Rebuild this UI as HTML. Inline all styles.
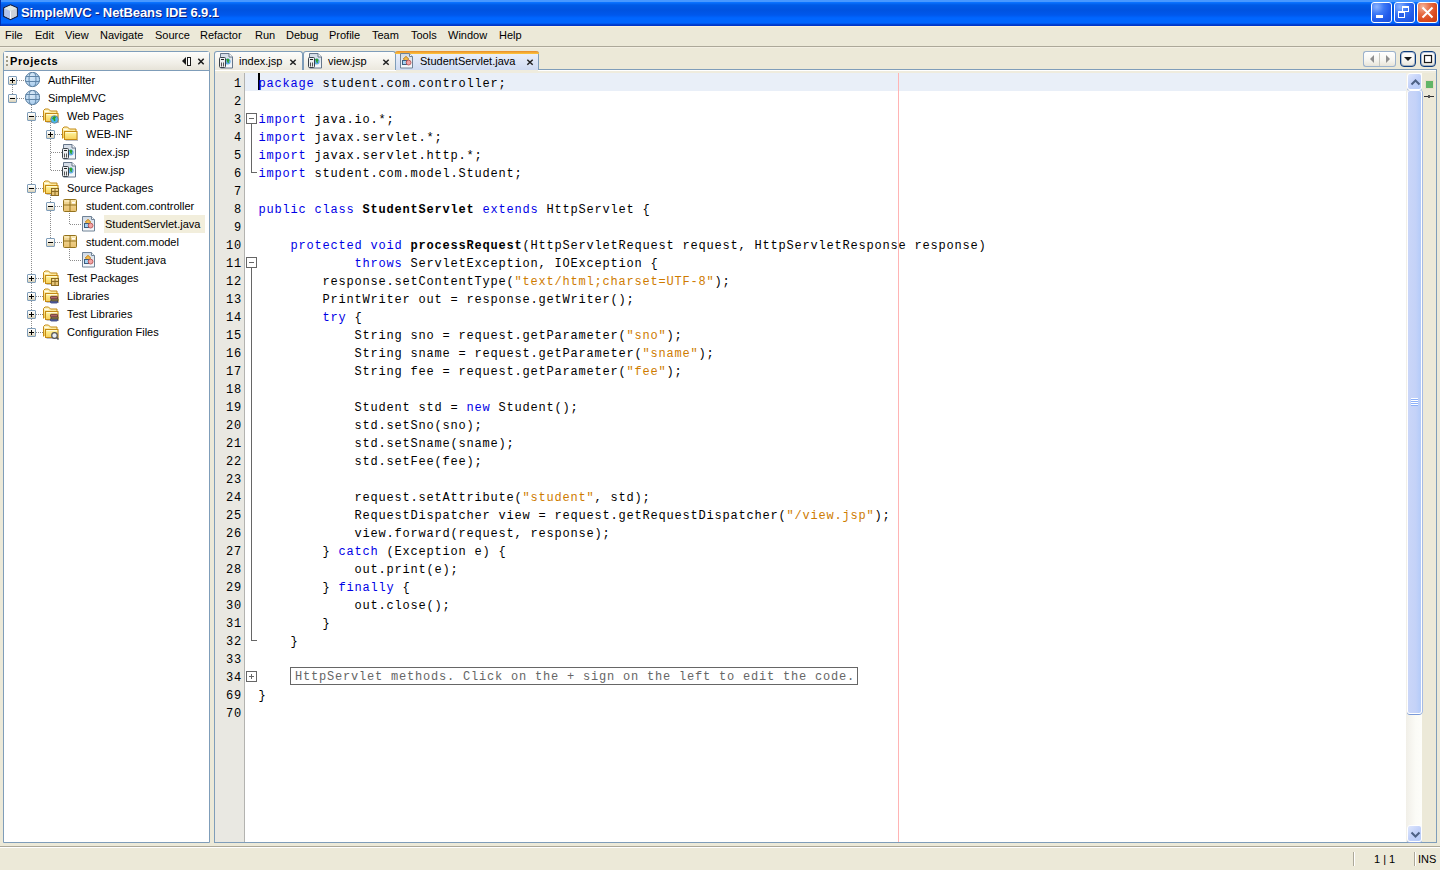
<!DOCTYPE html>
<html><head><meta charset="utf-8">
<style>
*{box-sizing:border-box}
html,body{margin:0;padding:0}
body{width:1440px;height:870px;overflow:hidden;position:relative;background:#ece9d8;font-family:"Liberation Sans",sans-serif;font-size:11px;color:#000}
.a{position:absolute}
#title{left:0;top:0;width:1440px;height:26px;background:linear-gradient(#4898ff 0px,#4898ff 1.5px,#0a72ff 2.5px,#005be6 5px,#0053e0 10px,#0058ec 15px,#0066ff 18px,#0066ff 23px,#0042d2 24.5px,#0030c4 26px);box-shadow:inset 1px 0 #0030b0,inset -1px 0 #0030b0}
.tt2{left:21px;top:5px;color:#fff;font-weight:bold;font-size:13px;line-height:16px;text-shadow:1px 1px #0a1e80;white-space:nowrap;letter-spacing:-0.1px}
.wb{top:2px;width:21px;height:21px;border:1px solid #fff;border-radius:3px;background:radial-gradient(circle at 25% 20%,#8cb4ff 0,#3c78f6 35%,#225ceb 65%,#1a4fd8 100%)}
.wb.x{background:radial-gradient(circle at 25% 20%,#f5b49a 0,#e66c44 35%,#dc4c20 65%,#c43b12 100%)}
#menu{left:0;top:26px;width:1440px;height:20px}
#menu span{position:absolute;top:3px;white-space:nowrap}
.sep1{left:0;width:1440px;height:1px;background:#aca899}
.sep2{left:0;width:1440px;height:1px;background:#fff}
#proj{left:3px;top:51px;width:207px;height:792px;border:1px solid #7f9db9;border-radius:3px 3px 0 0;background:#fff}
#proj .hd{left:0;top:0;width:205px;height:19px;border-bottom:1px solid #7f9db9;background:linear-gradient(#fdfdfb,#f1efe8 60%,#e6e3d8)}
.tr{position:absolute;white-space:nowrap}
.exp{position:absolute;width:9px;height:9px;border:1px solid #7f9db9;border-radius:1px;background:linear-gradient(#fff,#efeadb 60%,#d6cfb8)}
#ed{left:214px;top:69px;width:1223px;height:774px;border:1px solid #7f9db9;background:#fff}
.tab{position:absolute;top:51px;height:19px;border:1px solid #7f9db9;border-bottom:none;border-radius:3px 3px 0 0;background:linear-gradient(#fcfcfa,#f2f0e8 60%,#e9e6dc)}
.tab span{position:absolute;top:3px;white-space:nowrap}
.gut{left:0;top:3px;width:30px;height:770px;background:#e9e8e2;border-right:1px solid #b4b4b4}
.code{font-family:"Liberation Mono",monospace;font-size:12px;letter-spacing:0.8px;white-space:pre;line-height:18px;height:18px;padding-top:2px}
.ln{position:absolute;width:28px;text-align:right;left:214px}
.cl{position:absolute;left:258.4px}
.k{color:#0000e6}
.s{color:#ce7b00}
.b{font-weight:bold}
#ed{left:214px;top:69px;width:1223px;height:774px;border:1px solid #7f9db9;background:#fff}
.tab{position:absolute;top:51px;height:19px;border:1px solid #7f9db9;border-bottom:none;border-radius:3px 3px 0 0;background:linear-gradient(#fdfdfb,#f3f1ea 60%,#ebe8de)}
.tab.act{border:1px solid #7f9db9;border-top:none;border-bottom:none;height:19px;background:linear-gradient(#eef2fb,#dce5f6 60%,#cfdbf2)}
.tab.act:before{content:"";position:absolute;left:-1px;right:-1px;top:0;height:3px;border-radius:3px 3px 0 0;background:linear-gradient(#e68b2c,#ffc73c)}
.tt{top:52px;line-height:19px;white-space:nowrap}
.fb{width:11px;height:11px;border:1px solid #666;background:#fff}
.fb .h{position:absolute;left:2px;top:4px;width:5px;height:1px;background:#666}
.fb .v{position:absolute;left:4px;top:2px;width:1px;height:5px;background:#666}
.sbb{width:15px;height:17px;border:1px solid #fff;border-radius:3px;background:linear-gradient(135deg,#dfe7fd,#c2d1f9 50%,#b6cbf9);box-shadow:0 1px 0 #8fa8dc}
.sbt{width:15px;border:1px solid #fff;border-radius:3px;background:linear-gradient(90deg,#cad6f8,#c4d2f8 60%,#b3cbf9);box-shadow:1px 0 0 #a6bbe4,0 1px 0 #7a9ad8}
.nb{top:51px;width:16px;height:16px;border:1px solid #9cb2cc;border-radius:3px;background:linear-gradient(#fff,#f6f5f0 60%,#e8e4d8)}
.nb.dk{border:1px solid #0c3b7c;border-radius:4px;box-shadow:inset 0 0 0 1px rgba(12,59,124,.3)}
.nb svg{position:absolute;left:0;top:0}

</style></head><body>
<svg width="0" height="0" style="position:absolute">
<defs>
<linearGradient id="gf" x1="0" y1="0" x2="0" y2="1"><stop offset="0" stop-color="#fff8c8"/><stop offset="1" stop-color="#f2c94a"/></linearGradient>
<linearGradient id="gff" x1="0" y1="0" x2="0" y2="1"><stop offset="0" stop-color="#fff7a0"/><stop offset="1" stop-color="#f6cf5a"/></linearGradient>
<linearGradient id="gp" x1="0" y1="0" x2="0" y2="1"><stop offset="0" stop-color="#f3dca0"/><stop offset="1" stop-color="#e8c170"/></linearGradient>
<radialGradient id="gg" cx=".4" cy=".3" r=".75"><stop offset="0" stop-color="#dcebf8"/><stop offset="1" stop-color="#a6cbec"/></radialGradient>
<linearGradient id="gj" x1="0" y1="0" x2="0" y2="1"><stop offset="0" stop-color="#d0d9e4"/><stop offset="1" stop-color="#fafcfe"/></linearGradient>
</defs></svg>

<div id="title" class="a"></div>
<svg class="a" style="left:3px;top:4px" width="16" height="17" viewBox="0 0 16 17">
<path d="M7.5 .8L14.3 3.8V12.3L7.5 15.6L.7 12.3V3.8Z" fill="#c8d4e8" stroke="#141e3c" stroke-width="1.2"/>
<path d="M1.3 4.2L7.5 7L13.7 4.2L7.5 1.5Z" fill="#dfeae4"/>
<path d="M1.3 4.5L7.5 7.2V15L1.3 12Z" fill="#b4c4ea"/>
<path d="M7.5 7.2L13.7 4.5V12L7.5 15Z" fill="#ccd2d8"/>
<path d="M7.5 7.2V15" stroke="#f4f8ff" stroke-width="1"/>
</svg>
<div class="a tt2">SimpleMVC - NetBeans IDE 6.9.1</div>
<div class="a wb" style="left:1371px"><i style="position:absolute;left:4px;top:12px;width:7px;height:3px;background:#fff"></i></div>
<div class="a wb" style="left:1394px"><svg width="19" height="19" style="position:absolute;left:0;top:0"><path d="M7.5 7.5h4v-3M7.5 4.5v3" fill="none"/><rect x="7.5" y="3.5" width="6" height="5" fill="none" stroke="#fff" stroke-width="1"/><path d="M7 4h7" stroke="#fff" stroke-width="2"/><rect x="3.5" y="8.5" width="6" height="6" fill="#2a5fe8" stroke="#fff" stroke-width="1"/><path d="M3 9h7" stroke="#fff" stroke-width="2"/></svg></div>
<div class="a wb x" style="left:1417px"><svg width="19" height="19" style="position:absolute;left:0;top:0"><path d="M4.5 4.5l10 10M14.5 4.5l-10 10" stroke="#fff" stroke-width="2"/></svg></div>

<div class="a" style="left:0;top:26px;width:1440px;height:1px;background:#f9f3dd"></div>
<div id="menu" class="a">
<span style="left:5px">File</span><span style="left:35px">Edit</span><span style="left:65px">View</span><span style="left:100px">Navigate</span><span style="left:155px">Source</span><span style="left:200px">Refactor</span><span style="left:255px">Run</span><span style="left:286px">Debug</span><span style="left:329px">Profile</span><span style="left:372px">Team</span><span style="left:411px">Tools</span><span style="left:448px">Window</span><span style="left:499px">Help</span>
</div>
<div class="a sep1" style="top:46px"></div>
<div class="a" style="left:0;top:47px;width:1440px;height:1px;background:#f3efe2"></div>

<div id="proj" class="a">
  <div class="a hd"></div>
</div>
<div class="a" style="left:6px;top:56px;width:2px;height:10px;background:repeating-linear-gradient(#a09c88 0 2px,transparent 2px 4px)"></div>
<div class="a b" style="left:10px;top:54px;font-size:11px;line-height:15px;letter-spacing:0.6px">Projects</div>
<svg class="a" style="left:180px;top:55px" width="28" height="12" viewBox="0 0 28 12"><path d="M2 6L6 2V10Z" fill="#1a1a1a"/><rect x="7.5" y="2.5" width="3" height="8" fill="#fff" stroke="#1a1a1a"/><path d="M18.3 3.8l5.4 5.4M23.7 3.8l-5.4 5.4" stroke="#1a1a1a" stroke-width="1.5"/></svg>
<div class="a" style="left:12px;top:85px;width:1px;height:10px;background:repeating-linear-gradient(#8c8c8c 0 1px,transparent 1px 2px)"></div><div class="a" style="left:31px;top:105px;width:1px;height:228px;background:repeating-linear-gradient(#8c8c8c 0 1px,transparent 1px 2px)"></div><div class="a" style="left:50px;top:123px;width:1px;height:48px;background:repeating-linear-gradient(#8c8c8c 0 1px,transparent 1px 2px)"></div><div class="a" style="left:50px;top:195px;width:1px;height:44px;background:repeating-linear-gradient(#8c8c8c 0 1px,transparent 1px 2px)"></div><div class="a" style="left:69px;top:213px;width:1px;height:12px;background:repeating-linear-gradient(#8c8c8c 0 1px,transparent 1px 2px)"></div><div class="a" style="left:69px;top:249px;width:1px;height:12px;background:repeating-linear-gradient(#8c8c8c 0 1px,transparent 1px 2px)"></div><div class="a" style="left:17px;top:80px;width:7px;height:1px;background:repeating-linear-gradient(90deg,#8c8c8c 0 1px,transparent 1px 2px)"></div><div class="a" style="left:17px;top:98px;width:7px;height:1px;background:repeating-linear-gradient(90deg,#8c8c8c 0 1px,transparent 1px 2px)"></div><div class="a" style="left:36px;top:116px;width:7px;height:1px;background:repeating-linear-gradient(90deg,#8c8c8c 0 1px,transparent 1px 2px)"></div><div class="a" style="left:55px;top:134px;width:7px;height:1px;background:repeating-linear-gradient(90deg,#8c8c8c 0 1px,transparent 1px 2px)"></div><div class="a" style="left:51px;top:152px;width:11px;height:1px;background:repeating-linear-gradient(90deg,#8c8c8c 0 1px,transparent 1px 2px)"></div><div class="a" style="left:51px;top:170px;width:11px;height:1px;background:repeating-linear-gradient(90deg,#8c8c8c 0 1px,transparent 1px 2px)"></div><div class="a" style="left:36px;top:188px;width:7px;height:1px;background:repeating-linear-gradient(90deg,#8c8c8c 0 1px,transparent 1px 2px)"></div><div class="a" style="left:55px;top:206px;width:7px;height:1px;background:repeating-linear-gradient(90deg,#8c8c8c 0 1px,transparent 1px 2px)"></div><div class="a" style="left:70px;top:224px;width:11px;height:1px;background:repeating-linear-gradient(90deg,#8c8c8c 0 1px,transparent 1px 2px)"></div><div class="a" style="left:55px;top:242px;width:7px;height:1px;background:repeating-linear-gradient(90deg,#8c8c8c 0 1px,transparent 1px 2px)"></div><div class="a" style="left:70px;top:260px;width:11px;height:1px;background:repeating-linear-gradient(90deg,#8c8c8c 0 1px,transparent 1px 2px)"></div><div class="a" style="left:36px;top:278px;width:7px;height:1px;background:repeating-linear-gradient(90deg,#8c8c8c 0 1px,transparent 1px 2px)"></div><div class="a" style="left:36px;top:296px;width:7px;height:1px;background:repeating-linear-gradient(90deg,#8c8c8c 0 1px,transparent 1px 2px)"></div><div class="a" style="left:36px;top:314px;width:7px;height:1px;background:repeating-linear-gradient(90deg,#8c8c8c 0 1px,transparent 1px 2px)"></div><div class="a" style="left:36px;top:332px;width:7px;height:1px;background:repeating-linear-gradient(90deg,#8c8c8c 0 1px,transparent 1px 2px)"></div>
<div class="exp" style="left:8px;top:76px"><svg width="7" height="7" viewBox="0 0 9 9" style="position:absolute;left:0;top:0;width:9px;height:9px;margin:-1px"><path d="M2 4.5h5" stroke="#000"/><path d="M4.5 2v5" stroke="#000"/></svg></div>
<svg class="a" style="left:24px;top:72px" width="16" height="16" viewBox="0 0 16 16"><circle cx="8.5" cy="7.5" r="7.1" fill="url(#gg)" stroke="#52789b"/><path d="M1.6 4.5h13.8M1.6 9.5h13.8M6.4 .7c-1.8 2.5-1.8 11.1 0 13.6M10.6 .7c1.8 2.5 1.8 11.1 0 13.6" fill="none" stroke="#5f85a8" stroke-width="1"/></svg>
<div class="tr" style="left:48px;top:71px;line-height:18px">AuthFilter</div>
<div class="exp" style="left:8px;top:94px"><svg width="7" height="7" viewBox="0 0 9 9" style="position:absolute;left:0;top:0;width:9px;height:9px;margin:-1px"><path d="M2 4.5h5" stroke="#000"/></svg></div>
<svg class="a" style="left:24px;top:90px" width="16" height="16" viewBox="0 0 16 16"><circle cx="8.5" cy="7.5" r="7.1" fill="url(#gg)" stroke="#52789b"/><path d="M1.6 4.5h13.8M1.6 9.5h13.8M6.4 .7c-1.8 2.5-1.8 11.1 0 13.6M10.6 .7c1.8 2.5 1.8 11.1 0 13.6" fill="none" stroke="#5f85a8" stroke-width="1"/></svg>
<div class="tr" style="left:48px;top:89px;line-height:18px">SimpleMVC</div>
<div class="exp" style="left:27px;top:112px"><svg width="7" height="7" viewBox="0 0 9 9" style="position:absolute;left:0;top:0;width:9px;height:9px;margin:-1px"><path d="M2 4.5h5" stroke="#000"/></svg></div>
<svg class="a" style="left:43px;top:108px" width="16" height="16" viewBox="0 0 16 16"><path d="M3.5 14.5h12.5v-8" fill="none" stroke="rgba(40,50,80,.3)"/><path d="M.5 12.5v-10l1.5-1.5h3.5l2 2h6.5v3.5" fill="url(#gf)" stroke="#c48a14"/><path d="M1.5 3.5h4" stroke="#fff" stroke-width=".8"/><rect x="2.5" y="5.5" width="12.5" height="8" fill="url(#gff)" stroke="#c48a14"/><path d="M3.5 6.6h10.5" stroke="#fffbe0"/><circle cx="11.5" cy="11.5" r="3.8" fill="#4ab8f0" stroke="#6a7a8a" stroke-width=".8"/><path d="M10 9l2-1 1 1.5-1 1 .5 2-1.5 1-.5-2-1.5-.5z" fill="#2fa020"/></svg>
<div class="tr" style="left:67px;top:107px;line-height:18px">Web Pages</div>
<div class="exp" style="left:46px;top:130px"><svg width="7" height="7" viewBox="0 0 9 9" style="position:absolute;left:0;top:0;width:9px;height:9px;margin:-1px"><path d="M2 4.5h5" stroke="#000"/><path d="M4.5 2v5" stroke="#000"/></svg></div>
<svg class="a" style="left:62px;top:126px" width="16" height="16" viewBox="0 0 16 16"><path d="M3.5 14.5h12.5v-8" fill="none" stroke="rgba(40,50,80,.3)"/><path d="M.5 12.5v-10l1.5-1.5h3.5l2 2h6.5v3.5" fill="url(#gf)" stroke="#c48a14"/><path d="M1.5 3.5h4" stroke="#fff" stroke-width=".8"/><rect x="2.5" y="5.5" width="12.5" height="8" fill="url(#gff)" stroke="#c48a14"/><path d="M3.5 6.6h10.5" stroke="#fffbe0"/></svg>
<div class="tr" style="left:86px;top:125px;line-height:18px">WEB-INF</div>
<svg class="a" style="left:62px;top:144px" width="16" height="16" viewBox="0 0 16 16"><path d="M1.5 .5h8.5l3.5 3.5v11h-12z" fill="url(#gj)" stroke="#66768a"/><path d="M10 .5v3.5h3.5" fill="#fafcfe" stroke="#66768a"/><circle cx="8.6" cy="8.6" r="3" fill="#62aee8"/><path d="M7.2 6.2l2-.6 1.4 1.6-1 1.2.5 1.8-1.6-.8-.6-1.6z" fill="#2ea426"/><rect x=".5" y="4.5" width="6" height="10" rx="1" fill="#eceef0" stroke="#3a424a"/><path d="M2 6.5h3" stroke="#222"/><path d="M2.5 9.5v4M4.5 9.5v4" stroke="#555"/></svg>
<div class="tr" style="left:86px;top:143px;line-height:18px">index.jsp</div>
<svg class="a" style="left:62px;top:162px" width="16" height="16" viewBox="0 0 16 16"><path d="M1.5 .5h8.5l3.5 3.5v11h-12z" fill="url(#gj)" stroke="#66768a"/><path d="M10 .5v3.5h3.5" fill="#fafcfe" stroke="#66768a"/><circle cx="8.6" cy="8.6" r="3" fill="#62aee8"/><path d="M7.2 6.2l2-.6 1.4 1.6-1 1.2.5 1.8-1.6-.8-.6-1.6z" fill="#2ea426"/><rect x=".5" y="4.5" width="6" height="10" rx="1" fill="#eceef0" stroke="#3a424a"/><path d="M2 6.5h3" stroke="#222"/><path d="M2.5 9.5v4M4.5 9.5v4" stroke="#555"/></svg>
<div class="tr" style="left:86px;top:161px;line-height:18px">view.jsp</div>
<div class="exp" style="left:27px;top:184px"><svg width="7" height="7" viewBox="0 0 9 9" style="position:absolute;left:0;top:0;width:9px;height:9px;margin:-1px"><path d="M2 4.5h5" stroke="#000"/></svg></div>
<svg class="a" style="left:43px;top:180px" width="16" height="16" viewBox="0 0 16 16"><path d="M3.5 14.5h12.5v-8" fill="none" stroke="rgba(40,50,80,.3)"/><path d="M.5 12.5v-10l1.5-1.5h3.5l2 2h6.5v3.5" fill="url(#gf)" stroke="#c48a14"/><path d="M1.5 3.5h4" stroke="#fff" stroke-width=".8"/><rect x="2.5" y="5.5" width="12.5" height="8" fill="url(#gff)" stroke="#c48a14"/><path d="M3.5 6.6h10.5" stroke="#fffbe0"/><rect x="8.5" y="8.5" width="7" height="7" fill="#e6c476" stroke="#8a6a22"/><path d="M12 8.5v7M8.5 11.5h7" stroke="#8a6a22"/><path d="M9.5 9.6h1.8M12.8 9.6h1.8" stroke="#fff6d0" stroke-width=".8"/></svg>
<div class="tr" style="left:67px;top:179px;line-height:18px">Source Packages</div>
<div class="exp" style="left:46px;top:202px"><svg width="7" height="7" viewBox="0 0 9 9" style="position:absolute;left:0;top:0;width:9px;height:9px;margin:-1px"><path d="M2 4.5h5" stroke="#000"/></svg></div>
<svg class="a" style="left:62px;top:198px" width="16" height="16" viewBox="0 0 16 16"><rect x="1.5" y="1.5" width="13" height="12" rx="1" fill="url(#gp)" stroke="#94731e"/><path d="M8 1.5v12M1.5 7h13" stroke="#94731e"/><path d="M2.5 3h5M9 3h5" stroke="#fff3c8"/><rect x="10" y="4" width="3" height="1.5" fill="#fff"/></svg>
<div class="tr" style="left:86px;top:197px;line-height:18px">student.com.controller</div>
<svg class="a" style="left:81px;top:216px" width="16" height="16" viewBox="0 0 16 16"><path d="M1.5 .5h9l3 3v11.5h-12z" fill="url(#gj)" stroke="#6f8296"/><path d="M10.5 .5v3h3" fill="#f4f8fc" stroke="#6f8296"/><path d="M7 3.3l2.7 2.7-2.7 2.7-2.7-2.7z" fill="#f2b84a" stroke="#b8780e" stroke-width=".9"/><rect x="3.5" y="7.5" width="4" height="4" fill="#a6d4f4" stroke="#3e5e7e"/><circle cx="9.6" cy="9.6" r="2.4" fill="#f4a4a4" stroke="#b85050" stroke-width=".9"/></svg>
<div class="a" style="left:104px;top:215px;width:101px;height:18px;background:#f2eedc"></div>
<div class="tr" style="left:105px;top:215px;line-height:18px">StudentServlet.java</div>
<div class="exp" style="left:46px;top:238px"><svg width="7" height="7" viewBox="0 0 9 9" style="position:absolute;left:0;top:0;width:9px;height:9px;margin:-1px"><path d="M2 4.5h5" stroke="#000"/></svg></div>
<svg class="a" style="left:62px;top:234px" width="16" height="16" viewBox="0 0 16 16"><rect x="1.5" y="1.5" width="13" height="12" rx="1" fill="url(#gp)" stroke="#94731e"/><path d="M8 1.5v12M1.5 7h13" stroke="#94731e"/><path d="M2.5 3h5M9 3h5" stroke="#fff3c8"/><rect x="10" y="4" width="3" height="1.5" fill="#fff"/></svg>
<div class="tr" style="left:86px;top:233px;line-height:18px">student.com.model</div>
<svg class="a" style="left:81px;top:252px" width="16" height="16" viewBox="0 0 16 16"><path d="M1.5 .5h9l3 3v11.5h-12z" fill="url(#gj)" stroke="#6f8296"/><path d="M10.5 .5v3h3" fill="#f4f8fc" stroke="#6f8296"/><path d="M7 3.3l2.7 2.7-2.7 2.7-2.7-2.7z" fill="#f2b84a" stroke="#b8780e" stroke-width=".9"/><rect x="3.5" y="7.5" width="4" height="4" fill="#a6d4f4" stroke="#3e5e7e"/><circle cx="9.6" cy="9.6" r="2.4" fill="#f4a4a4" stroke="#b85050" stroke-width=".9"/></svg>
<div class="tr" style="left:105px;top:251px;line-height:18px">Student.java</div>
<div class="exp" style="left:27px;top:274px"><svg width="7" height="7" viewBox="0 0 9 9" style="position:absolute;left:0;top:0;width:9px;height:9px;margin:-1px"><path d="M2 4.5h5" stroke="#000"/><path d="M4.5 2v5" stroke="#000"/></svg></div>
<svg class="a" style="left:43px;top:270px" width="16" height="16" viewBox="0 0 16 16"><path d="M3.5 14.5h12.5v-8" fill="none" stroke="rgba(40,50,80,.3)"/><path d="M.5 12.5v-10l1.5-1.5h3.5l2 2h6.5v3.5" fill="url(#gf)" stroke="#c48a14"/><path d="M1.5 3.5h4" stroke="#fff" stroke-width=".8"/><rect x="2.5" y="5.5" width="12.5" height="8" fill="url(#gff)" stroke="#c48a14"/><path d="M3.5 6.6h10.5" stroke="#fffbe0"/><rect x="8.5" y="8.5" width="7" height="7" fill="#e6c476" stroke="#8a6a22"/><path d="M12 8.5v7M8.5 11.5h7" stroke="#8a6a22"/><path d="M9.5 9.6h1.8M12.8 9.6h1.8" stroke="#fff6d0" stroke-width=".8"/></svg>
<div class="tr" style="left:67px;top:269px;line-height:18px">Test Packages</div>
<div class="exp" style="left:27px;top:292px"><svg width="7" height="7" viewBox="0 0 9 9" style="position:absolute;left:0;top:0;width:9px;height:9px;margin:-1px"><path d="M2 4.5h5" stroke="#000"/><path d="M4.5 2v5" stroke="#000"/></svg></div>
<svg class="a" style="left:43px;top:288px" width="16" height="16" viewBox="0 0 16 16"><path d="M3.5 14.5h12.5v-8" fill="none" stroke="rgba(40,50,80,.3)"/><path d="M.5 12.5v-10l1.5-1.5h3.5l2 2h6.5v3.5" fill="url(#gf)" stroke="#c48a14"/><path d="M1.5 3.5h4" stroke="#fff" stroke-width=".8"/><rect x="2.5" y="5.5" width="12.5" height="8" fill="url(#gff)" stroke="#c48a14"/><path d="M3.5 6.6h10.5" stroke="#fffbe0"/><rect x="7.5" y="12.5" width="7" height="2.5" rx=".8" fill="#5a6ab0" stroke="#2c3470" stroke-width=".8"/><rect x="8" y="10.5" width="7" height="2.5" rx=".8" fill="#8a8050" stroke="#4a4020" stroke-width=".8"/><rect x="7.5" y="8.3" width="7" height="2.6" rx=".8" fill="#b06868" stroke="#5a2a2a" stroke-width=".8"/></svg>
<div class="tr" style="left:67px;top:287px;line-height:18px">Libraries</div>
<div class="exp" style="left:27px;top:310px"><svg width="7" height="7" viewBox="0 0 9 9" style="position:absolute;left:0;top:0;width:9px;height:9px;margin:-1px"><path d="M2 4.5h5" stroke="#000"/><path d="M4.5 2v5" stroke="#000"/></svg></div>
<svg class="a" style="left:43px;top:306px" width="16" height="16" viewBox="0 0 16 16"><path d="M3.5 14.5h12.5v-8" fill="none" stroke="rgba(40,50,80,.3)"/><path d="M.5 12.5v-10l1.5-1.5h3.5l2 2h6.5v3.5" fill="url(#gf)" stroke="#c48a14"/><path d="M1.5 3.5h4" stroke="#fff" stroke-width=".8"/><rect x="2.5" y="5.5" width="12.5" height="8" fill="url(#gff)" stroke="#c48a14"/><path d="M3.5 6.6h10.5" stroke="#fffbe0"/><rect x="7.5" y="12.5" width="7" height="2.5" rx=".8" fill="#5a6ab0" stroke="#2c3470" stroke-width=".8"/><rect x="8" y="10.5" width="7" height="2.5" rx=".8" fill="#8a8050" stroke="#4a4020" stroke-width=".8"/><rect x="7.5" y="8.3" width="7" height="2.6" rx=".8" fill="#b06868" stroke="#5a2a2a" stroke-width=".8"/></svg>
<div class="tr" style="left:67px;top:305px;line-height:18px">Test Libraries</div>
<div class="exp" style="left:27px;top:328px"><svg width="7" height="7" viewBox="0 0 9 9" style="position:absolute;left:0;top:0;width:9px;height:9px;margin:-1px"><path d="M2 4.5h5" stroke="#000"/><path d="M4.5 2v5" stroke="#000"/></svg></div>
<svg class="a" style="left:43px;top:324px" width="16" height="16" viewBox="0 0 16 16"><path d="M3.5 14.5h12.5v-8" fill="none" stroke="rgba(40,50,80,.3)"/><path d="M.5 12.5v-10l1.5-1.5h3.5l2 2h6.5v3.5" fill="url(#gf)" stroke="#c48a14"/><path d="M1.5 3.5h4" stroke="#fff" stroke-width=".8"/><rect x="2.5" y="5.5" width="12.5" height="8" fill="url(#gff)" stroke="#c48a14"/><path d="M3.5 6.6h10.5" stroke="#fffbe0"/><circle cx="11.5" cy="11.5" r="2.8" fill="#e8eef4" stroke="#555" stroke-width="1.2"/><path d="M13.5 13.5l2 2" stroke="#555" stroke-width="1.5"/></svg>
<div class="tr" style="left:67px;top:323px;line-height:18px">Configuration Files</div>
<div id="ed" class="a"></div>
<div class="a" style="left:215px;top:70px;width:1221px;height:1px;background:#fff"></div>
<div class="a" style="left:215px;top:71px;width:1221px;height:2px;background:#efecde"></div>
<div class="a" style="left:215px;top:73px;width:29px;height:769px;background:#e9e8e2"></div>
<div class="a" style="left:244px;top:73px;width:1px;height:769px;background:#b3b3b0"></div>
<!-- current line highlight -->
<div class="a" style="left:245px;top:73px;width:1161px;height:18px;background:#e9eff8"></div>
<!-- caret -->
<div class="a" style="left:258px;top:73px;width:2px;height:17px;background:#000"></div>
<!-- right margin line -->
<div class="a" style="left:898px;top:73px;width:1px;height:769px;background:#ffb4b4"></div>
<!-- fold markers -->
<div class="a fb" style="left:246px;top:113px"><i class="h"></i></div>
<div class="a" style="left:251px;top:124px;width:1px;height:49px;background:#666"></div>
<div class="a" style="left:251px;top:172px;width:6px;height:1px;background:#666"></div>
<div class="a fb" style="left:246px;top:257px"><i class="h"></i></div>
<div class="a" style="left:251px;top:268px;width:1px;height:373px;background:#666"></div>
<div class="a" style="left:251px;top:640px;width:6px;height:1px;background:#666"></div>
<div class="a fb" style="left:246px;top:671px"><i class="h"></i><i class="v"></i></div>
<!-- collapsed fold box -->
<div class="a" style="left:290px;top:667px;width:568px;height:18px;border:1px solid #666"></div>
<div class="a code" style="left:295px;top:666px;color:#666">HttpServlet methods. Click on the + sign on the left to edit the code.</div>
<!-- error stripe -->
<div class="a" style="left:1422px;top:73px;width:14px;height:769px;background:#ece9d8"></div>
<div class="a" style="left:1425px;top:80px;width:9px;height:9px;background:#fff;border:1px solid #e8e0cc"></div>
<div class="a" style="left:1426px;top:81px;width:7px;height:7px;background:#62b567"></div>
<div class="a" style="left:1424px;top:96px;width:10px;height:1px;background:#333"></div>
<div class="a" style="left:1428px;top:95px;width:2px;height:3px;background:#555"></div>
<!-- scrollbar -->
<div class="a" style="left:1406px;top:73px;width:16px;height:769px;background:linear-gradient(90deg,#f1efe8,#fbfbf6 60%,#fdfdf9)"></div>
<div class="a sbb" style="left:1407px;top:73px"><svg width="15" height="17" viewBox="0 0 15 17"><path d="M3.5 10.5L7.5 6.5L11.5 10.5" fill="none" stroke="#4d6185" stroke-width="2"/></svg></div>
<div class="a sbt" style="left:1407px;top:90px;height:624px"></div>
<div class="a" style="left:1411px;top:398px;width:7px;height:8px;background:repeating-linear-gradient(#fff 0 1px,#8cb0f8 1px 2px)"></div>
<div class="a sbb" style="left:1407px;top:825px"><svg width="15" height="17" viewBox="0 0 15 17"><path d="M3.5 6.5L7.5 10.5L11.5 6.5" fill="none" stroke="#4d6185" stroke-width="2"/></svg></div>
<!-- tabs -->
<div class="tab" style="left:214px;width:89px"></div>
<div class="tab" style="left:303px;width:93px"></div>
<div class="tab act" style="left:395px;width:144px"></div>
<div class="a" style="left:396px;top:70px;width:142px;height:1px;background:#efecde"></div>
<svg class="a" style="left:219px;top:53px" width="16" height="16" viewBox="0 0 16 16"><path d="M1.5 .5h8.5l3.5 3.5v11h-12z" fill="url(#gj)" stroke="#66768a"/><path d="M10 .5v3.5h3.5" fill="#fafcfe" stroke="#66768a"/><circle cx="8.6" cy="8.6" r="3" fill="#62aee8"/><path d="M7.2 6.2l2-.6 1.4 1.6-1 1.2.5 1.8-1.6-.8-.6-1.6z" fill="#2ea426"/><rect x=".5" y="4.5" width="6" height="10" rx="1" fill="#eceef0" stroke="#3a424a"/><path d="M2 6.5h3" stroke="#222"/><path d="M2.5 9.5v4M4.5 9.5v4" stroke="#555"/></svg>
<div class="a tt" style="left:239px">index.jsp</div>
<svg class="a" style="left:289px;top:58px" width="9" height="8" viewBox="0 0 9 8"><path d="M1.3 1.8l5.4 5M6.7 1.8l-5.4 5" stroke="#222" stroke-width="1.5"/></svg>
<svg class="a" style="left:308px;top:53px" width="16" height="16" viewBox="0 0 16 16"><path d="M1.5 .5h8.5l3.5 3.5v11h-12z" fill="url(#gj)" stroke="#66768a"/><path d="M10 .5v3.5h3.5" fill="#fafcfe" stroke="#66768a"/><circle cx="8.6" cy="8.6" r="3" fill="#62aee8"/><path d="M7.2 6.2l2-.6 1.4 1.6-1 1.2.5 1.8-1.6-.8-.6-1.6z" fill="#2ea426"/><rect x=".5" y="4.5" width="6" height="10" rx="1" fill="#eceef0" stroke="#3a424a"/><path d="M2 6.5h3" stroke="#222"/><path d="M2.5 9.5v4M4.5 9.5v4" stroke="#555"/></svg>
<div class="a tt" style="left:328px">view.jsp</div>
<svg class="a" style="left:382px;top:58px" width="9" height="8" viewBox="0 0 9 8"><path d="M1.3 1.8l5.4 5M6.7 1.8l-5.4 5" stroke="#222" stroke-width="1.5"/></svg>
<svg class="a" style="left:399px;top:53px" width="16" height="16" viewBox="0 0 16 16"><path d="M1.5 .5h9l3 3v11.5h-12z" fill="url(#gj)" stroke="#6f8296"/><path d="M10.5 .5v3h3" fill="#f4f8fc" stroke="#6f8296"/><path d="M7 3.3l2.7 2.7-2.7 2.7-2.7-2.7z" fill="#f2b84a" stroke="#b8780e" stroke-width=".9"/><rect x="3.5" y="7.5" width="4" height="4" fill="#a6d4f4" stroke="#3e5e7e"/><circle cx="9.6" cy="9.6" r="2.4" fill="#f4a4a4" stroke="#b85050" stroke-width=".9"/></svg>
<div class="a tt" style="left:420px">StudentServlet.java</div>
<svg class="a" style="left:526px;top:58px" width="9" height="8" viewBox="0 0 9 8"><path d="M1.3 1.8l5.4 5M6.7 1.8l-5.4 5" stroke="#222" stroke-width="1.5"/></svg>
<!-- tab nav buttons -->
<div class="a nb" style="left:1363px;width:17px;border-radius:3px 0 0 3px;border-right:none"><svg width="16" height="14"><path d="M10 3L6 7L10 11Z" fill="#8e8e8e"/></svg></div>
<div class="a" style="left:1379px;top:53px;width:1px;height:13px;background:#c8c8c0"></div>
<div class="a nb" style="left:1380px;width:16px;border-radius:0 3px 3px 0;border-left:none"><svg width="16" height="14"><path d="M6 3L10 7L6 11Z" fill="#8e8e8e"/></svg></div>
<div class="a nb dk" style="left:1400px"><svg width="14" height="14"><path d="M3 5H11L7 9Z" fill="#1a1a1a"/></svg></div>
<div class="a nb dk" style="left:1420px"><svg width="14" height="14"><rect x="3.5" y="3.5" width="7" height="7" fill="#fff" stroke="#1a1a1a" stroke-width="1.2"/></svg></div>

<div class="ln code" style="top:73px">1</div>
<div class="cl code" style="top:73px"><span class="k">package</span> student.com.controller;</div>
<div class="ln code" style="top:91px">2</div>
<div class="ln code" style="top:109px">3</div>
<div class="cl code" style="top:109px"><span class="k">import</span> java.io.*;</div>
<div class="ln code" style="top:127px">4</div>
<div class="cl code" style="top:127px"><span class="k">import</span> javax.servlet.*;</div>
<div class="ln code" style="top:145px">5</div>
<div class="cl code" style="top:145px"><span class="k">import</span> javax.servlet.http.*;</div>
<div class="ln code" style="top:163px">6</div>
<div class="cl code" style="top:163px"><span class="k">import</span> student.com.model.Student;</div>
<div class="ln code" style="top:181px">7</div>
<div class="ln code" style="top:199px">8</div>
<div class="cl code" style="top:199px"><span class="k">public</span> <span class="k">class</span> <span class="b">StudentServlet</span> <span class="k">extends</span> HttpServlet {</div>
<div class="ln code" style="top:217px">9</div>
<div class="ln code" style="top:235px">10</div>
<div class="cl code" style="top:235px">    <span class="k">protected</span> <span class="k">void</span> <span class="b">processRequest</span>(HttpServletRequest request, HttpServletResponse response)</div>
<div class="ln code" style="top:253px">11</div>
<div class="cl code" style="top:253px">            <span class="k">throws</span> ServletException, IOException {</div>
<div class="ln code" style="top:271px">12</div>
<div class="cl code" style="top:271px">        response.setContentType(<span class="s">&quot;text/html;charset=UTF-8&quot;</span>);</div>
<div class="ln code" style="top:289px">13</div>
<div class="cl code" style="top:289px">        PrintWriter out = response.getWriter();</div>
<div class="ln code" style="top:307px">14</div>
<div class="cl code" style="top:307px">        <span class="k">try</span> {</div>
<div class="ln code" style="top:325px">15</div>
<div class="cl code" style="top:325px">            String sno = request.getParameter(<span class="s">&quot;sno&quot;</span>);</div>
<div class="ln code" style="top:343px">16</div>
<div class="cl code" style="top:343px">            String sname = request.getParameter(<span class="s">&quot;sname&quot;</span>);</div>
<div class="ln code" style="top:361px">17</div>
<div class="cl code" style="top:361px">            String fee = request.getParameter(<span class="s">&quot;fee&quot;</span>);</div>
<div class="ln code" style="top:379px">18</div>
<div class="ln code" style="top:397px">19</div>
<div class="cl code" style="top:397px">            Student std = <span class="k">new</span> Student();</div>
<div class="ln code" style="top:415px">20</div>
<div class="cl code" style="top:415px">            std.setSno(sno);</div>
<div class="ln code" style="top:433px">21</div>
<div class="cl code" style="top:433px">            std.setSname(sname);</div>
<div class="ln code" style="top:451px">22</div>
<div class="cl code" style="top:451px">            std.setFee(fee);</div>
<div class="ln code" style="top:469px">23</div>
<div class="ln code" style="top:487px">24</div>
<div class="cl code" style="top:487px">            request.setAttribute(<span class="s">&quot;student&quot;</span>, std);</div>
<div class="ln code" style="top:505px">25</div>
<div class="cl code" style="top:505px">            RequestDispatcher view = request.getRequestDispatcher(<span class="s">&quot;/view.jsp&quot;</span>);</div>
<div class="ln code" style="top:523px">26</div>
<div class="cl code" style="top:523px">            view.forward(request, response);</div>
<div class="ln code" style="top:541px">27</div>
<div class="cl code" style="top:541px">        } <span class="k">catch</span> (Exception e) {</div>
<div class="ln code" style="top:559px">28</div>
<div class="cl code" style="top:559px">            out.print(e);</div>
<div class="ln code" style="top:577px">29</div>
<div class="cl code" style="top:577px">        } <span class="k">finally</span> {</div>
<div class="ln code" style="top:595px">30</div>
<div class="cl code" style="top:595px">            out.close();</div>
<div class="ln code" style="top:613px">31</div>
<div class="cl code" style="top:613px">        }</div>
<div class="ln code" style="top:631px">32</div>
<div class="cl code" style="top:631px">    }</div>
<div class="ln code" style="top:649px">33</div>
<div class="ln code" style="top:667px">34</div>
<div class="ln code" style="top:685px">69</div>
<div class="cl code" style="top:685px">}</div>
<div class="ln code" style="top:703px">70</div>

<div class="a sep1" style="top:846px"></div>
<div class="a sep2" style="top:847px"></div>
<div class="a" style="left:1353px;top:852px;width:1px;height:14px;background:#aca899"></div>
<div class="a" style="left:1354px;top:852px;width:1px;height:14px;background:#fff"></div>
<div class="a" style="left:1414px;top:852px;width:1px;height:14px;background:#aca899"></div>
<div class="a" style="left:1415px;top:852px;width:1px;height:14px;background:#fff"></div>
<div class="a" style="left:1374px;top:851px;line-height:16px;white-space:pre">1 | 1</div>
<div class="a" style="left:1418px;top:851px;line-height:16px">INS</div>

</body></html>
